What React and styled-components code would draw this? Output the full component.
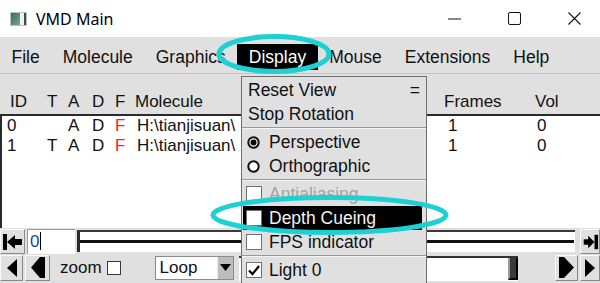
import React from "react";
import styled, { createGlobalStyle } from "styled-components";

const GlobalStyle = createGlobalStyle`
  html, body {
    margin: 0;
    padding: 0;
    background: #fff;
    overflow: hidden;
  }
  body {
    font-family: "Liberation Sans", Arial, sans-serif;
  }
`;

const Window = styled.div`
  position: relative;
  width: 600px;
  height: 283px;
  overflow: hidden;
  background: #e0e0e0;
  color: #111;
`;

/* ---- title bar ---- */

const TitleBar = styled.div`
  display: flex;
  align-items: center;
  height: 37px;
  padding-left: 10px;
  background: #fff;
`;

const Title = styled.span`
  margin-left: 9px;
  font-family: "Noto Sans", "Open Sans", sans-serif;
  font-size: 16px;
  color: #000;
`;

const WinControls = styled.div`
  display: flex;
  margin-left: auto;
  margin-right: -4px;
`;

const WinButton = styled.div`
  display: flex;
  align-items: center;
  justify-content: center;
  width: 60px;
  height: 37px;
`;

const AppIcon = () => (
  <svg width="17" height="14" viewBox="0 0 17 14">
    <defs>
      <linearGradient id="vmdicon" x1="0" y1="0" x2="1" y2="1">
        <stop offset="0" stopColor="#35657e" />
        <stop offset="1" stopColor="#7aa97a" />
      </linearGradient>
    </defs>
    <rect x="0" y="0" width="17" height="14" fill="#b9c3c8" />
    <rect x="1" y="1" width="9" height="12" fill="url(#vmdicon)" />
    <rect x="10" y="1" width="4" height="12" fill="#eef2f2" />
    <rect x="14" y="1" width="2" height="12" fill="#3e4c56" />
  </svg>
);

/* ---- menu bar ---- */

const MenuBar = styled.div`
  display: flex;
  align-items: flex-start;
  height: 37px;
  padding-top: 7px;
  box-sizing: border-box;
  border-bottom: 1px solid #c4c4c4;
`;

const MenuItem = styled.div`
  height: 26px;
  line-height: 26px;
  padding: 0 11.5px;
  font-size: 17.5px;
  background: ${(p) => (p.$active ? "#000" : "transparent")};
  color: ${(p) => (p.$active ? "#fff" : "#111")};
`;

/* ---- molecule list ---- */

const COLS = "21px 24px 23px 20px 309px 91px 1fr";

const ListHeader = styled.div`
  display: grid;
  grid-template-columns: 47px ${COLS};
  height: 40px;
  padding-top: 18px;
  box-sizing: border-box;
  font-size: 17px;
  line-height: 19px;

  & > span:first-child {
    padding-left: 10px;
  }
`;

const List = styled.div`
  height: 112px;
  background: #fff;
  border-top: 2px solid #2a2a2a;
  border-left: 2px solid #2a2a2a;
`;

const Row = styled.div`
  display: grid;
  grid-template-columns: 45px ${COLS};
  height: 20px;
  line-height: 20px;
  font-size: 17px;
  white-space: nowrap;
`;

const Cell = styled.span`
  padding-left: ${(p) => p.$pad || 0}px;
  color: ${(p) => (p.$red ? "#ff2020" : "inherit")};
`;

/* ---- animation controls ---- */

const ControlRow = styled.div`
  display: flex;
  align-items: ${(p) => p.$align || "stretch"};
  gap: 2px;
  height: ${(p) => p.$h}px;
  margin-top: ${(p) => p.$mt || 0}px;
`;

const NavButton = styled.div`
  display: flex;
  align-items: center;
  justify-content: center;
  flex: none;
  width: ${(p) => p.$w}px;
  height: ${(p) => p.$bh || 25}px;
  margin-left: ${(p) => p.$ml || 0}px;
  box-sizing: border-box;
  background: #e0e0e0;
  border: 1px solid;
  border-color: #fafafa #8a8a8a #8a8a8a #fafafa;
`;

const FrameInput = styled.div`
  width: 48px;
  box-sizing: border-box;
  padding-left: 2px;
  background: #fff;
  border-top: 1px solid #9a9a9a;
  border-left: 1px solid #9a9a9a;
  font-size: 17px;
  line-height: 24px;
  color: #1a3fc0;

  &::after {
    content: "";
    display: inline-block;
    width: 1px;
    height: 18px;
    margin-left: 1px;
    vertical-align: -3px;
    background: #000;
  }
`;

const Track = styled.div`
  flex: 1;
  height: 22px;
  margin-top: 1px;
  box-sizing: border-box;
  padding-top: 8px;
  background: #fff;
  border-top: 2px solid #3a3a3a;
  border-left: 3px solid #2a2a2a;
`;

const TrackLine = styled.div`
  height: 3px;
  margin-right: 1px;
  background: #111;
`;

const Label = styled.span`
  margin-left: ${(p) => p.$ml || 0}px;
  font-size: 17px;
`;

const SmallCheck = styled.span`
  width: 12px;
  height: 12px;
  margin-left: 3px;
  background: #fff;
  border: 1px solid #3a3a3a;
`;

const Select = styled.div`
  display: flex;
  align-items: stretch;
  width: 79px;
  height: 24px;
  margin-left: 32px;
  box-sizing: border-box;
  background: #fff;
  border: 1px solid #8a8a8a;
  font-size: 17px;
`;

const SelectText = styled.span`
  flex: 1;
  padding-left: 4px;
  line-height: 22px;
`;

const SelectArrow = styled.span`
  display: flex;
  align-items: center;
  justify-content: center;
  width: 15px;
  background: #bdbdbd;
  border-left: 1px solid #eee;
`;

const SpeedSlider = styled.div`
  display: flex;
  justify-content: flex-end;
  flex: 1;
  height: 25px;
  margin-left: 3px;
  align-self: flex-end;
  box-sizing: border-box;
  background: #fff;
  border-top: 2px solid #333;
`;

const Thumb = styled.div`
  width: 10px;
  height: 22px;
  box-sizing: border-box;
  background: #3a3a3a;
  border-left: 2px solid #9a9a9a;
  border-right: 2px solid #000;
  border-bottom: 2px solid #000;
`;

/* ---- display menu ---- */

const DropMenu = styled.div`
  position: absolute;
  left: 241px;
  top: 76px;
  bottom: -8px;
  width: 186px;
  box-sizing: border-box;
  padding: 1px 4px 0 1px;
  background: #e0e0e0;
  border: 1px solid #6e6e6e;
  font-size: 17.5px;
`;

const Entry = styled.div`
  display: flex;
  align-items: center;
  height: 24px;
  padding-left: ${(p) => (p.$toggle ? 2 : 5)}px;
  padding-right: 2px;
  white-space: nowrap;
  background: ${(p) => (p.$hl ? "#000" : "transparent")};
  color: ${(p) => (p.$hl ? "#f2f2f2" : p.$disabled ? "#a3a3a3" : "#111")};
`;

const EntryText = styled.span`
  margin-left: ${(p) => (p.$toggle ? 7 : 0)}px;
`;

const Shortcut = styled.span`
  margin-left: auto;
`;

const Indicator = styled.span`
  display: flex;
  align-items: center;
  justify-content: center;
  width: 17px;
  height: 17px;
`;

const CheckBox = styled.span`
  display: flex;
  align-items: center;
  justify-content: center;
  width: 16px;
  height: 16px;
  box-sizing: border-box;
  background: #fff;
  border: 1px solid #707070;
`;

const Separator = styled.div`
  height: 1px;
  margin: 1px -4px 1px -1px;
  background: #9a9a9a;
  border-bottom: 1px solid #f4f4f4;
`;

const Annotations = styled.svg`
  position: absolute;
  left: 0;
  top: 0;
  pointer-events: none;
`;

/* ---- icons ---- */

const Radio = ({ on }) => (
  <svg width="13" height="13" viewBox="0 0 13 13">
    <circle cx="6.5" cy="6.5" r="5.2" fill="#fff" stroke="#111" strokeWidth="2" />
    {on && <circle cx="6.5" cy="6.5" r="3" fill="#000" />}
  </svg>
);

const Check = () => (
  <svg width="14" height="14" viewBox="0 0 14 14">
    <path d="M2 7.5 L5.5 11 L12 3" fill="none" stroke="#000" strokeWidth="2.2" />
  </svg>
);

const ToStart = () => (
  <svg width="21" height="16" viewBox="0 0 21 16">
    <rect x="1" y="0" width="4" height="16" fill="#000" />
    <polygon points="5,8 13,1 13,15" fill="#000" />
    <rect x="12" y="5" width="8" height="6" fill="#000" />
  </svg>
);

const ToEnd = () => (
  <svg width="20" height="16" viewBox="0 0 20 16">
    <rect x="3" y="5" width="6" height="6" fill="#000" />
    <polygon points="15,8 8,1 8,15" fill="#000" />
    <rect x="15" y="0" width="4" height="16" fill="#000" />
  </svg>
);

const Tri = ({ dir, w = 10, h = 18 }) => (
  <svg width={w} height={h} viewBox={`0 0 ${w} ${h}`}>
    <polygon
      points={dir === "left" ? `0,${h / 2} ${w},0 ${w},${h}` : `${w},${h / 2} 0,0 0,${h}`}
      fill="#000"
    />
  </svg>
);

const StepBack = () => (
  <svg width="14" height="21" viewBox="0 0 14 21">
    <polygon points="0,10.5 9,0 9,21" fill="#000" />
    <rect x="9" y="0" width="5" height="21" fill="#000" />
  </svg>
);

const StepFwd = () => (
  <svg width="15" height="21" viewBox="0 0 15 21">
    <rect x="0" y="0" width="5" height="21" fill="#000" />
    <polygon points="15,10.5 5,0 5,21" fill="#000" />
  </svg>
);

const DownArrow = () => (
  <svg width="11" height="7" viewBox="0 0 11 7">
    <polygon points="0,0 11,0 5.5,7" fill="#000" />
  </svg>
);

const menus = ["File", "Molecule", "Graphics", "Display", "Mouse", "Extensions", "Help"];

const molecules = [
  { id: "0", t: "", a: "A", d: "D", f: "F", name: "H:\\tianjisuan\\", frames: "1", vol: "0" },
  { id: "1", t: "T", a: "A", d: "D", f: "F", name: "H:\\tianjisuan\\", frames: "1", vol: "0" },
];

export default function App() {
  return (
    <Window>
      <GlobalStyle />
      <TitleBar>
        <AppIcon />
        <Title>VMD Main</Title>
        <WinControls>
          <WinButton>
            <svg width="13" height="2" viewBox="0 0 13 2">
              <rect x="0" y="0.5" width="13" height="1" fill="#111" />
            </svg>
          </WinButton>
          <WinButton>
            <svg width="13" height="13" viewBox="0 0 13 13">
              <rect x="0.5" y="0.5" width="12" height="12" rx="1.5" fill="none" stroke="#111" />
            </svg>
          </WinButton>
          <WinButton>
            <svg width="13" height="13" viewBox="0 0 13 13">
              <path d="M0.5 0.5 L12.5 12.5 M12.5 0.5 L0.5 12.5" stroke="#111" strokeWidth="1.1" />
            </svg>
          </WinButton>
        </WinControls>
      </TitleBar>

      <MenuBar>
        {menus.map((m) => (
          <MenuItem key={m} $active={m === "Display"}>
            {m}
          </MenuItem>
        ))}
      </MenuBar>

      <ListHeader>
        <span>ID</span>
        <span>T</span>
        <span>A</span>
        <span>D</span>
        <span>F</span>
        <span>Molecule</span>
        <span>Frames</span>
        <span>Vol</span>
      </ListHeader>

      <List>
        {molecules.map((m) => (
          <Row key={m.id}>
            <Cell $pad={5}>{m.id}</Cell>
            <Cell>{m.t}</Cell>
            <Cell>{m.a}</Cell>
            <Cell>{m.d}</Cell>
            <Cell $red>{m.f}</Cell>
            <Cell $pad={2}>{m.name}</Cell>
            <Cell $pad={4}>{m.frames}</Cell>
            <Cell $pad={2}>{m.vol}</Cell>
          </Row>
        ))}
      </List>

      <ControlRow $h={25} $mt={1}>
        <NavButton $w={25}>
          <ToStart />
        </NavButton>
        <FrameInput>0</FrameInput>
        <Track>
          <TrackLine />
        </Track>
        <NavButton $w={20} $ml={3}>
          <ToEnd />
        </NavButton>
      </ControlRow>

      <ControlRow $h={27} $align="center">
        <NavButton $w={23} $bh={26}>
          <Tri dir="left" />
        </NavButton>
        <NavButton $w={25} $bh={26}>
          <StepBack />
        </NavButton>
        <Label $ml={8}>zoom</Label>
        <SmallCheck />
        <Select>
          <SelectText>Loop</SelectText>
          <SelectArrow>
            <DownArrow />
          </SelectArrow>
        </Select>
        <SpeedSlider>
          <Thumb />
        </SpeedSlider>
        <NavButton $w={23} $bh={26} $ml={35}>
          <StepFwd />
        </NavButton>
        <NavButton $w={20} $bh={26}>
          <Tri dir="right" />
        </NavButton>
      </ControlRow>

      <DropMenu>
        <Entry>
          <span>Reset View</span>
          <Shortcut>=</Shortcut>
        </Entry>
        <Entry>
          <span>Stop Rotation</span>
        </Entry>
        <Separator />
        <Entry $toggle>
          <Indicator>
            <Radio on />
          </Indicator>
          <EntryText $toggle>Perspective</EntryText>
        </Entry>
        <Entry $toggle>
          <Indicator>
            <Radio />
          </Indicator>
          <EntryText $toggle>Orthographic</EntryText>
        </Entry>
        <Separator />
        <Entry $toggle $disabled>
          <Indicator>
            <CheckBox />
          </Indicator>
          <EntryText $toggle>Antialiasing</EntryText>
        </Entry>
        <Entry $toggle $hl>
          <Indicator>
            <CheckBox />
          </Indicator>
          <EntryText $toggle>Depth Cueing</EntryText>
        </Entry>
        <Entry $toggle>
          <Indicator>
            <CheckBox />
          </Indicator>
          <EntryText $toggle>FPS indicator</EntryText>
        </Entry>
        <Separator />
        <Entry $toggle>
          <Indicator>
            <CheckBox>
              <Check />
            </CheckBox>
          </Indicator>
          <EntryText $toggle>Light 0</EntryText>
        </Entry>
      </DropMenu>

      <Annotations width="600" height="283" viewBox="0 0 600 283">
        <ellipse cx="274" cy="54" rx="55" ry="17.5" fill="none" stroke="#1dd0d3" strokeWidth="5" />
        <ellipse cx="329.5" cy="215" rx="116.5" ry="17.5" fill="none" stroke="#1dd0d3" strokeWidth="5" />
      </Annotations>
    </Window>
  );
}
